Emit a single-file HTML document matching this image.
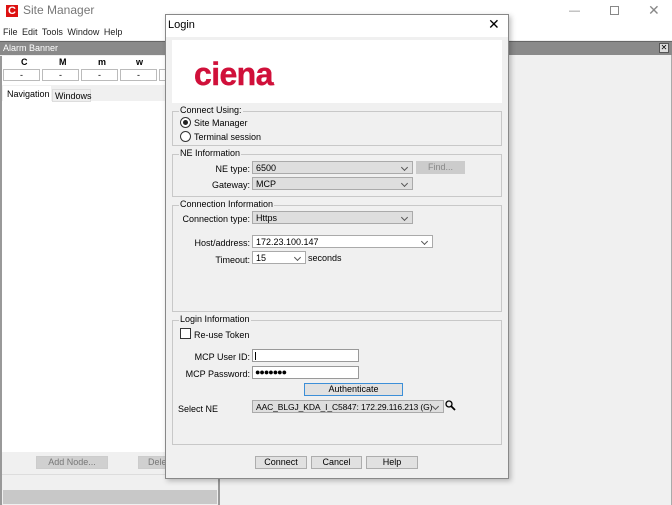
<!DOCTYPE html>
<html><head><meta charset="utf-8"><style>
*{margin:0;padding:0;box-sizing:border-box}
body{width:672px;height:505px;overflow:hidden;background:#f0f0f0;font-family:"Liberation Sans",sans-serif;font-size:9px;color:#000;position:relative}
.a{position:absolute;white-space:nowrap}
.box{position:absolute;border:1px solid #c8c8c8}
.lg{position:absolute;top:-7px;left:6px;background:#f0f0f0;padding:0 1px;font-size:9px}
.cb{position:absolute;background:#dedede;border:1px solid #aaa;height:13px;font-size:9px;padding:1px 3px;line-height:10px;white-space:nowrap;overflow:hidden}
.cb.w{background:#fff}
.cb:after{content:"";position:absolute;right:5px;top:3px;width:4px;height:4px;border-right:1px solid #555;border-bottom:1px solid #555;transform:rotate(45deg)}
.tx{position:absolute;background:#fff;border:1px solid #999;height:13px}
.bt{position:absolute;background:#e1e1e1;border:1px solid #adadad;height:13px;text-align:center;font-size:9px;line-height:11px;white-space:nowrap}
.r{text-align:right}
</style></head><body>
<div class="a" style="left:0;top:0;width:672px;height:40px;background:#fff"></div>
<div class="a" style="left:6px;top:5px;width:12px;height:12px;background:#d11;color:#fff;font-weight:bold;font-size:11px;line-height:12px;text-align:center">C</div>
<div class="a" style="left:23px;top:3px;font-size:12px;color:#777">Site Manager</div>
<div class="a" style="left:3px;top:27px;font-size:9px;color:#222;word-spacing:2px">File Edit Tools Window Help</div>
<div class="a" style="left:569px;top:5px;color:#888;font-size:11px">—</div>
<div class="a" style="left:610px;top:6px;width:9px;height:9px;border:1px solid #888"></div>
<div class="a" style="left:648px;top:2px;color:#888;font-size:14px">✕</div>
<div class="a" style="left:0;top:41px;width:672px;height:14px;background:#8a8a8a;border-top:1px solid #666"></div>
<div class="a" style="left:3px;top:43px;color:#fff;font-size:9px">Alarm Banner</div>
<div class="a" style="left:659px;top:43px;width:10px;height:10px;border:1px solid #555;background:#ddd;font-size:8px;line-height:8px;text-align:center">✕</div>
<div class="a" style="left:671px;top:55px;width:1px;height:450px;background:#aaa"></div>
<div class="a" style="left:2px;top:56px;width:216px;height:399px;background:#fff"></div>
<div class="a" style="left:3px;top:57px;width:200px;font-weight:bold;font-size:9px">
<span class="a" style="left:18px">C</span><span class="a" style="left:56px">M</span><span class="a" style="left:95px">m</span><span class="a" style="left:133px">w</span></div>
<div class="a" style="left:3px;top:69px;width:37px;height:12px;border:1px solid #bbb;text-align:center">-</div>
<div class="a" style="left:42px;top:69px;width:37px;height:12px;border:1px solid #bbb;text-align:center">-</div>
<div class="a" style="left:81px;top:69px;width:37px;height:12px;border:1px solid #bbb;text-align:center">-</div>
<div class="a" style="left:120px;top:69px;width:37px;height:12px;border:1px solid #bbb;text-align:center">-</div>
<div class="a" style="left:159px;top:69px;width:10px;height:12px;border:1px solid #bbb"></div>
<div class="a" style="left:2px;top:85px;width:216px;height:16px;background:#f0f0f0"></div>
<div class="a" style="left:3px;top:86px;width:48px;height:16px;background:#fff;padding:3px 4px">Navigation</div>
<div class="a" style="left:52px;top:89px;width:39px;height:13px;background:#eee;border:1px solid #ddd;padding:1px 2px">Windows</div>
<div class="a" style="left:218px;top:56px;width:2px;height:449px;background:#999"></div>
<div class="a" style="left:0;top:56px;width:2px;height:449px;background:#999"></div>
<div class="a" style="left:2px;top:452px;width:216px;height:53px;background:#f0f0f0"></div>
<div class="bt" style="left:36px;top:456px;width:72px;background:#d0d0d0;border-color:#ccc;color:#777">Add Node...</div>
<div class="bt" style="left:138px;top:456px;width:40px;background:#d0d0d0;border-color:#ccc;color:#777;text-align:left;padding-left:9px">Delete</div>
<div class="a" style="left:2px;top:474px;width:216px;height:1px;background:#ddd"></div>
<div class="a" style="left:3px;top:490px;width:214px;height:14px;background:#c8c8c8"></div>
<!-- dialog -->
<div class="a" style="left:165px;top:14px;width:344px;height:465px;background:#f0f0f0;border:1px solid #888;box-shadow:2px 2px 5px rgba(0,0,0,.25)"></div>
<div class="a" style="left:166px;top:15px;width:342px;height:22px;background:#fff"></div>
<div class="a" style="left:168px;top:19px;font-size:11px">Login</div>
<div class="a" style="left:488px;top:16px;font-size:14px">✕</div>
<div class="a" style="left:172px;top:40px;width:330px;height:63px;background:#fff"></div>
<div class="a" style="left:194px;top:56px;font-size:32px;font-weight:bold;color:#d0103a;letter-spacing:-0.6px;-webkit-text-stroke:0.4px #d0103a">ciena<span style="font-size:6px">.</span></div>

<div class="box" style="left:172px;top:111px;width:330px;height:35px"><span class="lg">Connect Using:</span></div>
<div class="a" style="left:180px;top:117px;width:11px;height:11px;border:1px solid #333;border-radius:50%;background:#fff"><div class="a" style="left:2px;top:2px;width:5px;height:5px;border-radius:50%;background:#222"></div></div>
<div class="a" style="left:194px;top:118px">Site Manager</div>
<div class="a" style="left:180px;top:131px;width:11px;height:11px;border:1px solid #333;border-radius:50%;background:#fff"></div>
<div class="a" style="left:194px;top:132px">Terminal session</div>

<div class="box" style="left:172px;top:154px;width:330px;height:43px"><span class="lg">NE Information</span></div>
<div class="a r" style="left:180px;top:164px;width:70px">NE type:</div>
<div class="cb" style="left:252px;top:161px;width:161px">6500</div>
<div class="bt" style="left:416px;top:161px;width:49px;background:#ccc;border-color:#ccc;color:#888">Find...</div>
<div class="a r" style="left:180px;top:180px;width:70px">Gateway:</div>
<div class="cb" style="left:252px;top:177px;width:161px">MCP</div>

<div class="box" style="left:172px;top:205px;width:330px;height:107px"><span class="lg">Connection Information</span></div>
<div class="a r" style="left:170px;top:214px;width:80px">Connection type:</div>
<div class="cb" style="left:252px;top:211px;width:161px">Https</div>
<div class="a r" style="left:170px;top:238px;width:80px">Host/address:</div>
<div class="cb w" style="left:252px;top:235px;width:181px">172.23.100.147</div>
<div class="a r" style="left:170px;top:255px;width:80px">Timeout:</div>
<div class="cb w" style="left:252px;top:251px;width:54px">15</div>
<div class="a" style="left:308px;top:253px">seconds</div>

<div class="box" style="left:172px;top:320px;width:330px;height:125px"><span class="lg">Login Information</span></div>
<div class="a" style="left:180px;top:328px;width:11px;height:11px;border:1px solid #333;background:#fff"></div>
<div class="a" style="left:194px;top:330px">Re-use Token</div>
<div class="a r" style="left:170px;top:352px;width:80px">MCP User ID:</div>
<div class="tx" style="left:252px;top:349px;width:107px"><div class="a" style="left:2px;top:2px;width:1px;height:8px;background:#000"></div></div>
<div class="a r" style="left:170px;top:369px;width:80px">MCP Password:</div>
<div class="tx" style="left:252px;top:366px;width:107px;font-size:9px;line-height:10px;padding-left:2px;letter-spacing:-1px">●●●●●●●</div>
<div class="bt" style="left:304px;top:383px;width:99px;border-color:#3c8fd8">Authenticate</div>
<div class="a" style="left:178px;top:404px">Select NE</div>
<div class="cb" style="left:252px;top:400px;width:192px;font-size:8.5px;letter-spacing:-0.1px">AAC_BLGJ_KDA_I_C5847: 172.29.116.213 (G)</div>
<svg class="a" style="left:445px;top:400px" width="11" height="11"><circle cx="4" cy="4" r="3" fill="none" stroke="#000" stroke-width="1.3"/><path d="M6 6 L10 10" stroke="#000" stroke-width="1.8"/></svg>

<div class="bt" style="left:255px;top:456px;width:52px">Connect</div>
<div class="bt" style="left:311px;top:456px;width:51px">Cancel</div>
<div class="bt" style="left:366px;top:456px;width:52px">Help</div>
</body></html>
